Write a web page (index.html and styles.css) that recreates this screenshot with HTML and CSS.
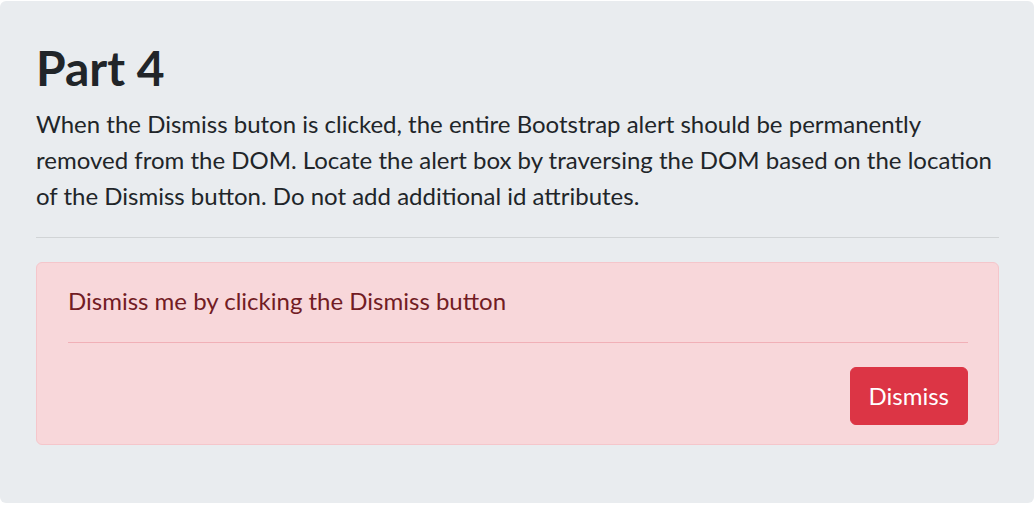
FILE: index.html
```html
<!DOCTYPE html>
<html>
  <head>
    <title>Part 4</title>
    <link rel="stylesheet" href="styles.css">
  </head>
  <body>
    <div class="jumbotron">
      <h1>Part 4</h1>
      <p class="lead">
        When the Dismiss buton is clicked, the entire Bootstrap alert should be
        permanently removed from the DOM. Locate the alert box by traversing the
        DOM based on the location of the Dismiss button. Do not add additional
        id attributes.
      </p>
      <hr class="divider" />
      <div class="alert">
        <p class="alert-text">Dismiss me by clicking the Dismiss button</p>
        <hr class="alert-divider" />
        <div class="alert-actions">
          <button class="btn-dismiss">Dismiss</button>
        </div>
      </div>
    </div>
    <script>
      document.querySelectorAll(".btn-dismiss").forEach((button) => {
        button.addEventListener("click", () => {
          button.closest(".alert").remove();
        });
      });
    </script>
  </body>
</html>
```

FILE: styles.css
```css
body {
  font-family: Lato, "Noto Sans", sans-serif;
  color: #212529;
  background-color: #fff;
  margin: 0;
}
.jumbotron {
  background-color: #e9ecef;
  border-radius: 6px;
  margin: 1px 2px 1px 0;
  padding: 38px 35px 58px 36px;
}
h1 {
  font-size: 48px;
  font-weight: 700;
  line-height: 1.2;
  margin: 0 0 9px;
}
.lead {
  font-size: 24px;
  line-height: 36px;
  margin: 0;
}
.divider {
  border: 0;
  border-top: 1px solid rgba(0, 0, 0, 0.1);
  margin: 23px 0 24px;
}
.alert {
  background-color: #f8d7da;
  border: 1px solid #f5c6cb;
  border-radius: 6px;
  color: #721c24;
  padding: 20px 30px 19px 31px;
}
.alert-text {
  font-size: 24px;
  line-height: 36px;
  margin: 0;
}
.alert-divider {
  border: 0;
  border-top: 1px solid #f1b0b7;
  margin: 23px 0 24px;
}
.alert-actions {
  display: flex;
  justify-content: flex-end;
}
.btn-dismiss {
  font-family: inherit;
  font-size: 24px;
  line-height: 36px;
  color: #fff;
  background-color: #dc3545;
  border: 1px solid #dc3545;
  border-radius: 6px;
  padding: 10px 18px;
  cursor: pointer;
}
```
